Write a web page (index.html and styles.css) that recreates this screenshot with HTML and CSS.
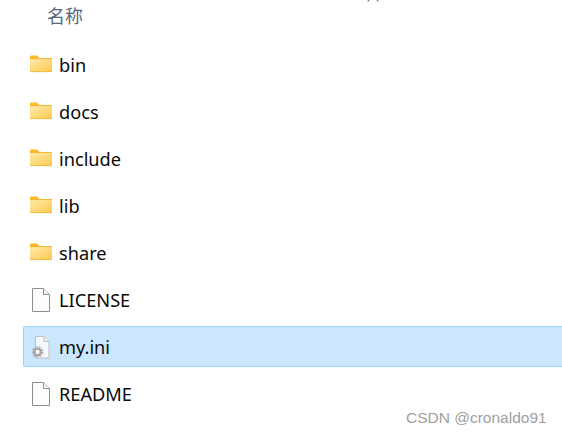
FILE: index.html
```html
<!DOCTYPE html>
<html lang="zh">
<head>
<meta charset="utf-8">
<title>文件列表</title>
<link rel="stylesheet" href="styles.css">
</head>
<body>
<svg class="defs" width="0" height="0" aria-hidden="true">
  <defs>
    <linearGradient id="fg" x1="0" y1="0" x2="1" y2="1">
      <stop offset="0" stop-color="#ffe9a6"/>
      <stop offset="1" stop-color="#fcc94f"/>
    </linearGradient>
    <symbol id="folder" viewBox="0 0 22 18">
      <path d="M0 2C0 1 .6.500 1.500.500H7L9.500 3H0z" fill="#fdb92a"/>
      <path d="M0 3h22v1.500H0z" fill="#f7b62e"/>
      <path d="M0 4.500h22V17H0z" fill="url(#fg)"/>
      <path d="M0 16.500h22v.6H0z" fill="#e8aa2c"/>
    </symbol>
    <symbol id="file" viewBox="0 0 18 24">
      <path d="M.5.500h11l6 6v17H.5z" fill="#fdfdfd" stroke="#8f8f8f"/>
      <path d="M11.500.500v6h6" fill="#f4f4f4" stroke="#8f8f8f"/>
    </symbol>
    <symbol id="ini" viewBox="0 0 18 24">
      <path d="M3.500 1.500h8.500l5 5v16.500H3.500z" fill="#f6f9fb" stroke="#bcc0c3"/>
      <path d="M12 1.500v5h5" fill="#eef1f3" stroke="#bcc0c3"/>
      <circle cx="5.500" cy="17" r="3.400" fill="none" stroke="#a5a5a5" stroke-width="2.400"/>
      <circle cx="5.500" cy="17" r="5.200" fill="none" stroke="#b0b0b0" stroke-width="1.500" stroke-dasharray="2 1.600"/>
    </symbol>
  </defs>
</svg>
<header class="head">
  <span class="col">名称</span>
  <span class="sort"></span>
</header>
<main class="list">
  <div class="row"><svg class="ic folder"><use href="#folder"/></svg><span>bin</span></div>
  <div class="row"><svg class="ic folder"><use href="#folder"/></svg><span>docs</span></div>
  <div class="row"><svg class="ic folder"><use href="#folder"/></svg><span>include</span></div>
  <div class="row"><svg class="ic folder"><use href="#folder"/></svg><span>lib</span></div>
  <div class="row"><svg class="ic folder"><use href="#folder"/></svg><span>share</span></div>
  <div class="row"><svg class="ic file"><use href="#file"/></svg><span>LICENSE</span></div>
  <div class="row selected"><svg class="ic file"><use href="#ini"/></svg><span>my.ini</span></div>
  <div class="row"><svg class="ic file"><use href="#file"/></svg><span>README</span></div>
</main>
<footer class="mark">CSDN @cronaldo91</footer>
</body>
</html>
```
FILE: styles.css
```css
html, body {
  margin: 0;
  height: 100%;
  background: #fff;
  overflow: hidden;
}
body {
  position: relative;
  font-family: "Noto Sans", "Noto Sans CJK SC", sans-serif;
  color: #0a0a0a;
}
.defs { position: absolute; }
.head {
  height: 30px;
  padding-left: 47px;
  display: flex;
  align-items: center;
  position: relative;
}
.col {
  font-family: "Noto Sans CJK SC", sans-serif;
  font-size: 18px;
  color: #55657a;
  line-height: 30px;
}
.sort {
  position: absolute;
  left: 369px;
  top: -3px;
  width: 7px;
  height: 7px;
  border-left: 1px solid #777;
  border-top: 1px solid #777;
  transform: rotate(45deg);
}
.list {
  display: flex;
  flex-direction: column;
  gap: 6px;
  padding: 14px 0 0 23px;
}
.row {
  height: 41px;
  box-sizing: border-box;
  display: flex;
  align-items: center;
  font-size: 18.200px;
  border: 1px solid transparent;
  border-right: 0;
  margin-right: -2px;
}
.ic { flex: none; }
.ic.folder { width: 22px; height: 18px; margin: -1px 7px 0 6px; }
.ic.file { width: 18px; height: 24px; margin-left: 8px; margin-right: 9px; }
.selected {
  background: #cbe7ff;
  border-color: #99d1ff;
  border-radius: 2px 0 0 2px;
}
.mark {
  position: absolute;
  left: 406px;
  top: 409px;
  font-family: "Liberation Sans", sans-serif;
  font-size: 15.500px;
  line-height: 18px;
  color: #a0a0a0;
}
```
